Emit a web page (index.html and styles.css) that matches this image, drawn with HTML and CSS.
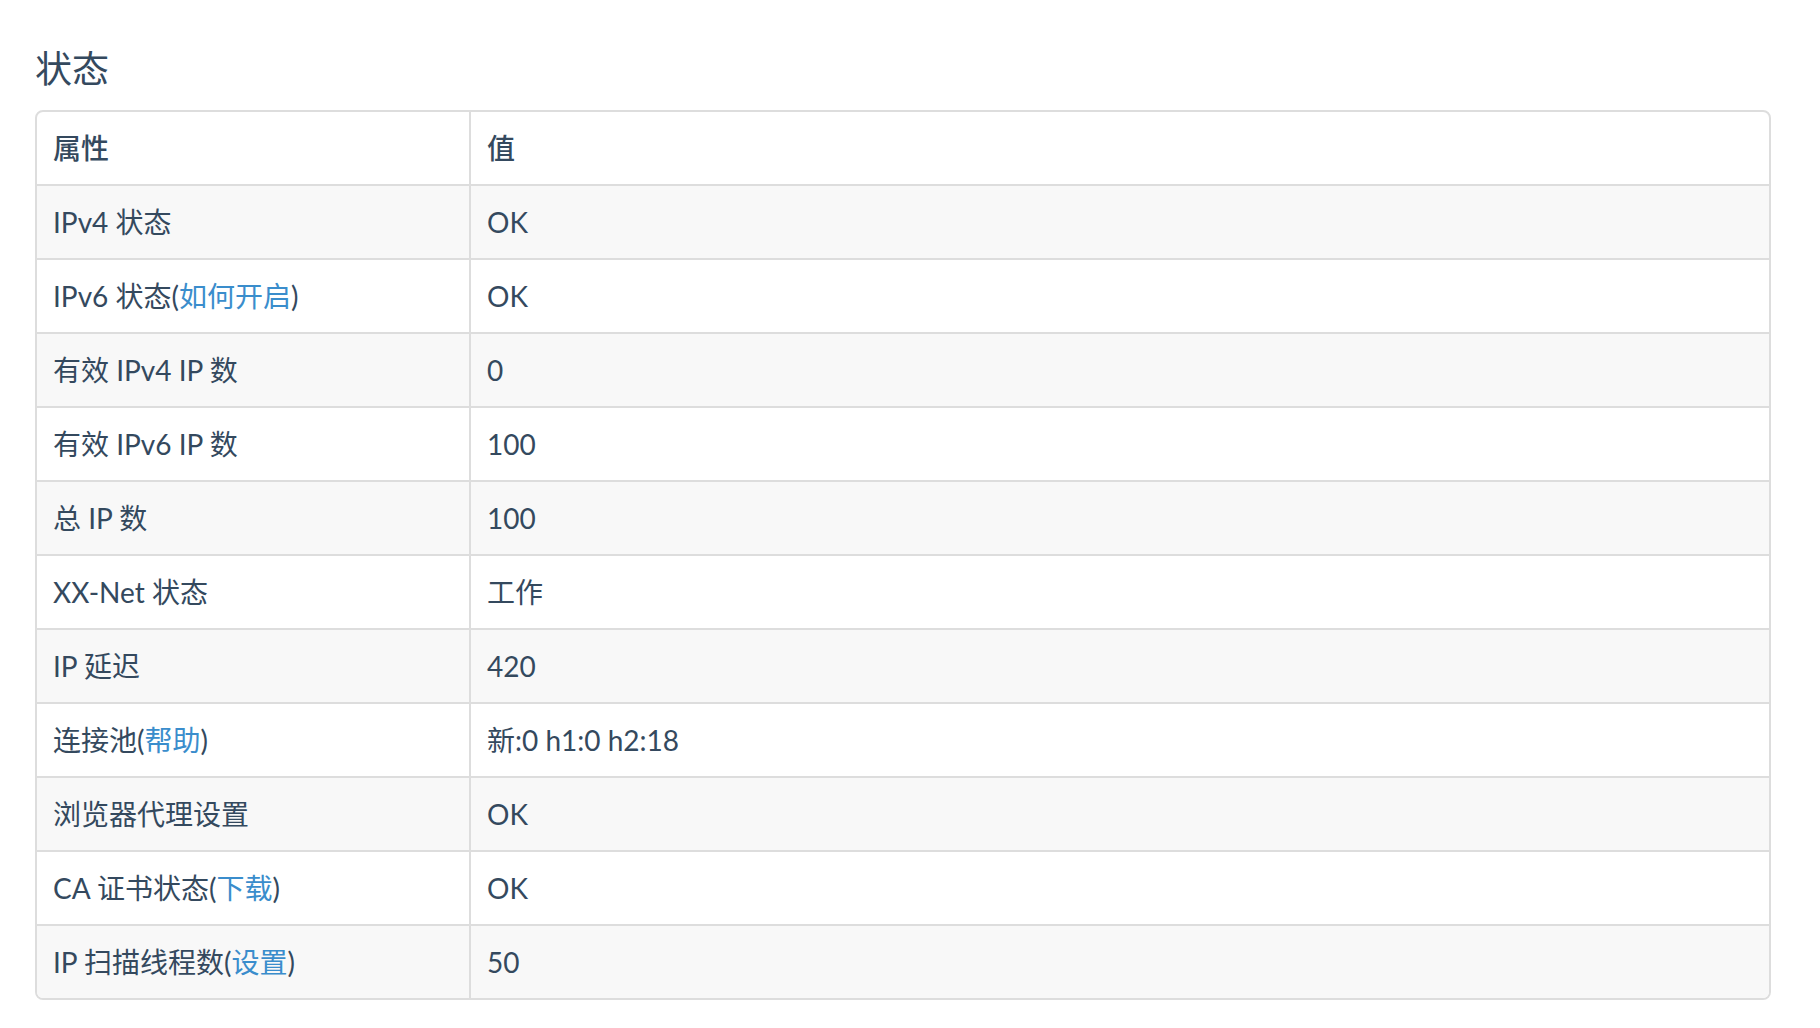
FILE: index.html
```html
<!DOCTYPE html>
<html lang="zh-CN">
<head>
<meta charset="utf-8">
<title>状态</title>
<link rel="stylesheet" href="styles.css">
</head>
<body>
<div class="page">
  <h2 class="title">状态</h2>
  <div class="table-wrap">
    <table class="status-table">
      <thead>
        <tr><th class="col-key">属性</th><th>值</th></tr>
      </thead>
      <tbody>
        <tr><td>IPv4 状态</td><td>OK</td></tr>
        <tr><td>IPv6 状态(<a href="#">如何开启</a>)</td><td>OK</td></tr>
        <tr><td>有效 IPv4 IP 数</td><td>0</td></tr>
        <tr><td>有效 IPv6 IP 数</td><td>100</td></tr>
        <tr><td>总 IP 数</td><td>100</td></tr>
        <tr><td>XX-Net 状态</td><td>工作</td></tr>
        <tr><td>IP 延迟</td><td>420</td></tr>
        <tr><td>连接池(<a href="#">帮助</a>)</td><td>新:0 h1:0 h2:18</td></tr>
        <tr><td>浏览器代理设置</td><td>OK</td></tr>
        <tr><td>CA 证书状态(<a href="#">下载</a>)</td><td>OK</td></tr>
        <tr><td>IP 扫描线程数(<a href="#">设置</a>)</td><td>50</td></tr>
      </tbody>
    </table>
  </div>
</div>
</body>
</html>
```

FILE: styles.css
```css
html, body {
  margin: 0;
  padding: 0;
  background: #ffffff;
}
body {
  font-family: "Lato", "Noto Sans CJK SC", sans-serif;
  color: #34495e;
}
.page {
  padding: 47px 49px 0 35px;
}
.title {
  margin: 0 0 19px 0;
  font-size: 37px;
  line-height: 44px;
  font-weight: normal;
  color: #34495e;
}
.table-wrap {
  border: 2px solid #dddddd;
  border-radius: 8px;
  overflow: hidden;
}
.status-table {
  width: 100%;
  border-collapse: collapse;
  font-size: 28px;
  line-height: 40px;
}
.status-table th,
.status-table td {
  padding: 16px 16px;
  text-align: left;
  vertical-align: middle;
  border-left: 2px solid #dddddd;
  border-top: 2px solid #dddddd;
}
.status-table tr > :first-child {
  border-left: none;
}
.status-table thead tr > * {
  border-top: none;
}
.status-table th {
  font-weight: 500;
}
.status-table .col-key {
  width: 25%;
}
.status-table tbody tr:nth-child(odd) {
  background: #f8f8f8;
}
.status-table a {
  color: #3a8dcc;
  text-decoration: none;
}
```
